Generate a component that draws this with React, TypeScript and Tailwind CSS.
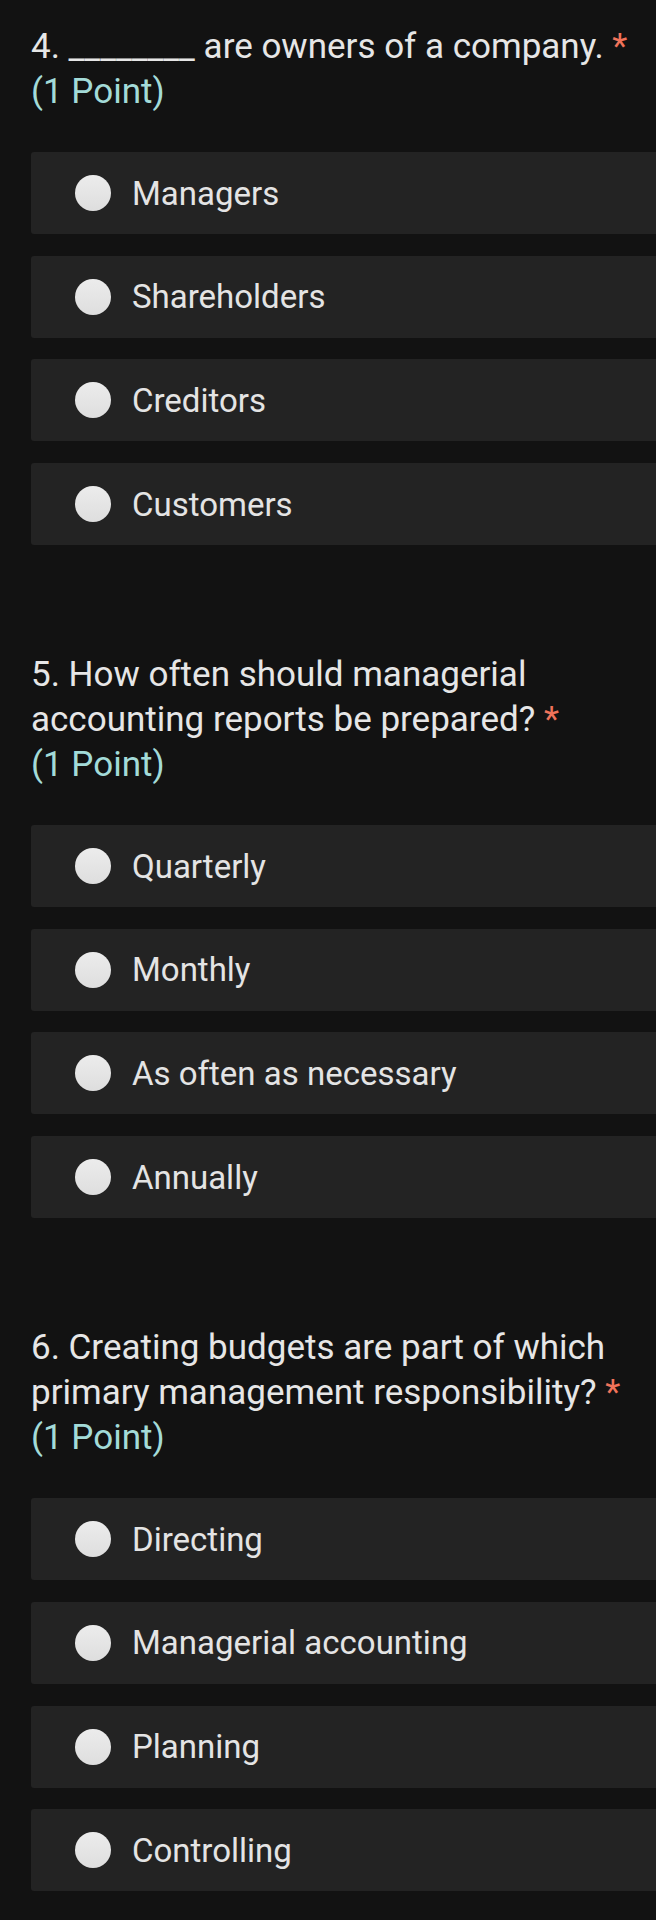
const questions = [
  {
    title: "4. ________ are owners of a company.",
    options: ["Managers", "Shareholders", "Creditors", "Customers"],
  },
  {
    title: "5. How often should managerial accounting reports be prepared?",
    options: ["Quarterly", "Monthly", "As often as necessary", "Annually"],
  },
  {
    title: "6. Creating budgets are part of which primary management responsibility?",
    options: ["Directing", "Managerial accounting", "Planning", "Controlling"],
  },
];

function Option({ label }: { label: string }) {
  return (
    <div className="flex h-[82px] items-center rounded-l-[3px] bg-[#232323] pl-[44px]">
      <span className="h-[36px] w-[36px] shrink-0 rounded-full bg-gradient-to-b from-[#ececec] to-[#dedede]" />
      <span className="ml-[21px] text-[33px] leading-none text-[#e4e4e4]">{label}</span>
    </div>
  );
}

function Question({ title, options, first }: { title: string; options: string[]; first?: boolean }) {
  return (
    <section className={first ? "pt-[24px]" : "pt-[107px]"}>
      <div className="mb-[38px] text-[35px] leading-[45px] text-[#e6e6e6]">
        <p>
          {title} <span className="text-[#f0735a]">*</span>
        </p>
        <p className="text-[#a3dbd8]">(1 Point)</p>
      </div>
      <div className="flex flex-col gap-[21.7px]">
        {options.map((o) => (
          <Option key={o} label={o} />
        ))}
      </div>
    </section>
  );
}

export default function App() {
  return (
    <div className="min-h-[1920px] bg-[#121212] pl-[31px] font-['Roboto',sans-serif]">
      {questions.map((q, i) => (
        <Question key={q.title} title={q.title} options={q.options} first={i === 0} />
      ))}
    </div>
  );
}
